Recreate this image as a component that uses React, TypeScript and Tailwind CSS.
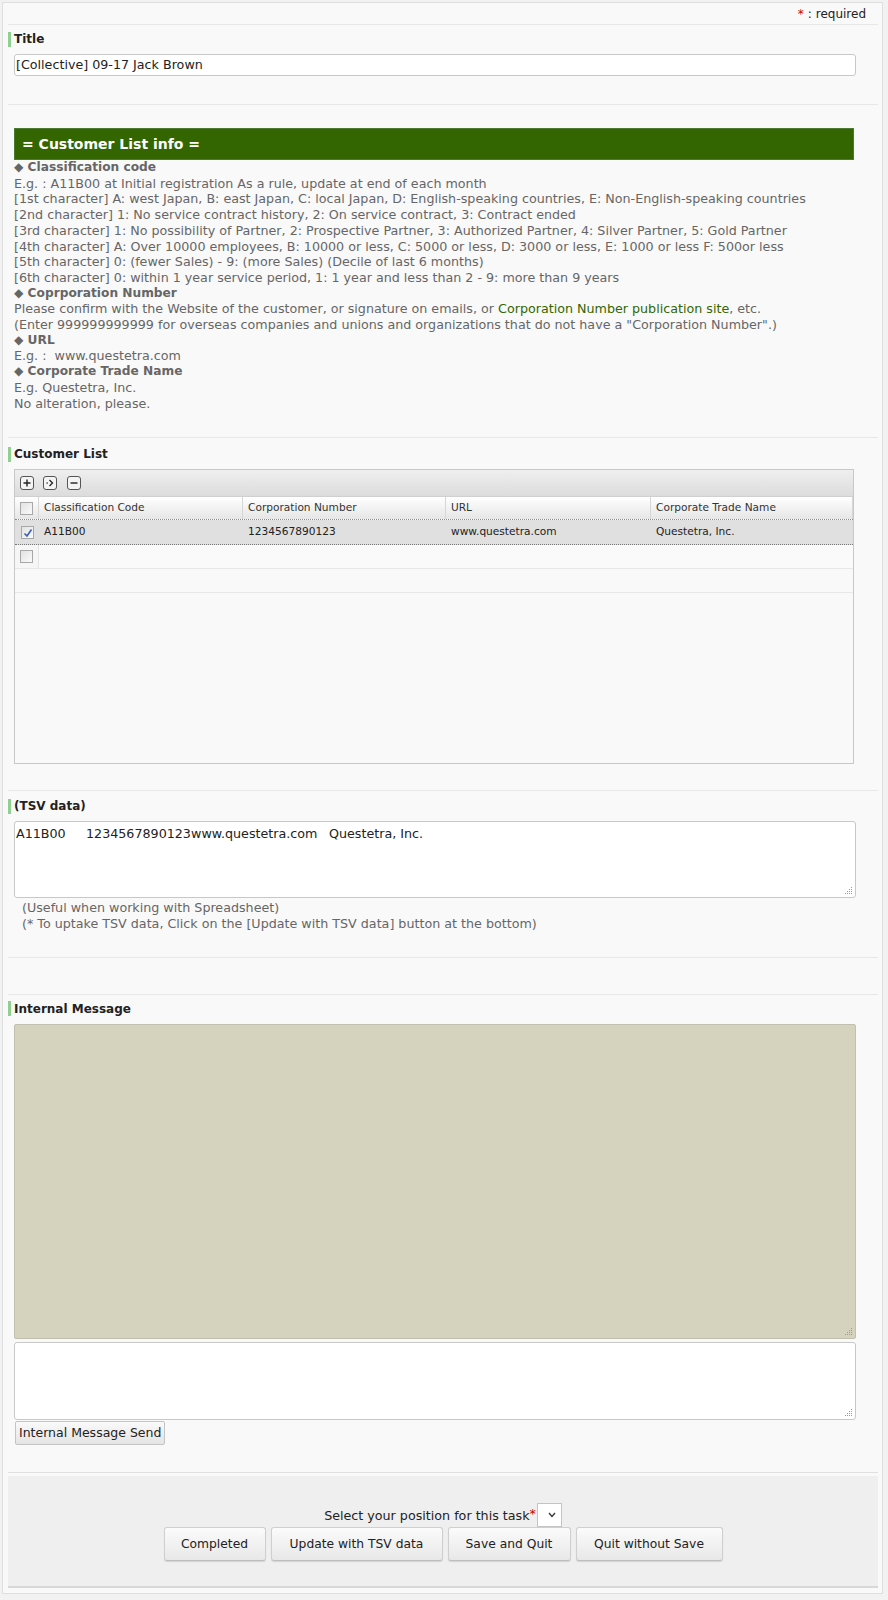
import React from 'react';

const Label = ({ children }: { children: React.ReactNode }) => (
  <div className="flex items-center h-[16px] mb-[7px]">
    <span className="w-[3px] h-[15px] bg-[#8fcf8f] mr-[3px]" />
    <span className="font-bold text-[12px] text-[#222]">{children}</span>
  </div>
);

const Grip = () => (
  <svg className="absolute right-[2px] bottom-[2px]" width="8" height="8" viewBox="0 0 8 8">
    <rect x="6" y="0" width="1" height="1" fill="#999" />
    <rect x="4" y="2" width="1" height="1" fill="#999" />
    <rect x="6" y="2" width="1" height="1" fill="#999" />
    <rect x="2" y="4" width="1" height="1" fill="#999" />
    <rect x="4" y="4" width="1" height="1" fill="#999" />
    <rect x="6" y="4" width="1" height="1" fill="#999" />
    <rect x="0" y="6" width="1" height="1" fill="#999" />
    <rect x="2" y="6" width="1" height="1" fill="#999" />
    <rect x="4" y="6" width="1" height="1" fill="#999" />
    <rect x="6" y="6" width="1" height="1" fill="#999" />
  </svg>
);

const Checkbox = ({ checked = false }: { checked?: boolean }) => (
  <span className="relative inline-block w-[13px] h-[13px] border border-[#a8a8a8] bg-gradient-to-br from-[#e2e2e2] to-[#fafafa]">
    {checked && (
      <svg className="absolute left-[1px] top-[1px]" width="10" height="10" viewBox="0 0 10 10">
        <path d="M1.5 5.5 L4 8 L8.5 1.5" stroke="#3b5fb0" strokeWidth="1.6" fill="none" />
      </svg>
    )}
  </span>
);

const ToolButton = ({ kind }: { kind: 'add' | 'insert' | 'remove' }) => (
  <span className="inline-flex items-center justify-center w-[14px] h-[14px] border border-[#555] rounded-[3px] bg-[#f4f4f4]">
    <svg width="10" height="10" viewBox="0 0 10 10">
      {kind === 'add' && <path d="M5 1.5 V8.5 M1.5 5 H8.5" stroke="#222" strokeWidth="1.4" />}
      {kind === 'remove' && <path d="M1.5 5 H8.5" stroke="#222" strokeWidth="1.4" />}
      {kind === 'insert' && (
        <>
          <rect x="1.5" y="4.4" width="1.3" height="1.3" fill="#222" />
          <path d="M4.5 2 L7.5 5 L4.5 8" stroke="#222" strokeWidth="1.3" fill="none" />
        </>
      )}
    </svg>
  </span>
);

const columns = ['Classification Code', 'Corporation Number', 'URL', 'Corporate Trade Name'];
const colWidths = ['w-[204px]', 'w-[203px]', 'w-[205px]', 'flex-1'];
const rows = [['A11B00', '1234567890123', 'www.questetra.com', 'Questetra, Inc.']];

const infoLines: { text: React.ReactNode; bold?: boolean }[] = [
  { text: '◆ Classification code', bold: true },
  { text: 'E.g. : A11B00 at Initial registration As a rule, update at end of each month' },
  { text: '[1st character] A: west Japan, B: east Japan, C: local Japan, D: English-speaking countries, E: Non-English-speaking countries' },
  { text: '[2nd character] 1: No service contract history, 2: On service contract, 3: Contract ended' },
  { text: '[3rd character] 1: No possibility of Partner, 2: Prospective Partner, 3: Authorized Partner, 4: Silver Partner, 5: Gold Partner' },
  { text: '[4th character] A: Over 10000 employees, B: 10000 or less, C: 5000 or less, D: 3000 or less, E: 1000 or less F: 500or less' },
  { text: '[5th character] 0: (fewer Sales) - 9: (more Sales) (Decile of last 6 months)' },
  { text: '[6th character] 0: within 1 year service period, 1: 1 year and less than 2 - 9: more than 9 years' },
  { text: '◆ Coprporation Number', bold: true },
  {
    text: (
      <>
        Please confirm with the Website of the customer, or signature on emails, or{' '}
        <span className="text-[#336600]">Corporation Number publication site</span>, etc.
      </>
    ),
  },
  { text: '(Enter 999999999999 for overseas companies and unions and organizations that do not have a "Corporation Number".)' },
  { text: '◆ URL', bold: true },
  { text: 'E.g. :\u00a0\u00a0www.questetra.com' },
  { text: '◆ Corporate Trade Name', bold: true },
  { text: 'E.g. Questetra, Inc.' },
  { text: 'No alteration, please.' },
];

const tsv = [
  { v: 'A11B00', w: 'w-[70px]' },
  { v: '1234567890123', w: 'w-[105px]' },
  { v: 'www.questetra.com', w: 'w-[138px]' },
  { v: 'Questetra, Inc.', w: '' },
];

const actions = [
  { label: 'Completed', w: 'w-[102px]' },
  { label: 'Update with TSV data', w: 'w-[172px]' },
  { label: 'Save and Quit', w: 'w-[123px]' },
  { label: 'Quit without Save', w: 'w-[147px]' },
];

const App = () => {
  return (
    <div className="min-h-[1600px] bg-[#f2f2f2] pt-[2px] pl-[2px] pr-[5px] font-['DejaVu_Sans',sans-serif] text-[#222]">
      <div className="border border-[#dedede] bg-[#f9f9f9] pl-[5px] pr-[4px]">
        {/* required note */}
        <div className="h-[21px] flex items-center justify-end pr-[12px] text-[12px]">
          <span className="text-[#c00] mr-[4px]">*</span>: required
        </div>

        {/* Title */}
        <section className="border-t border-[#e8e8e8] pt-[6px] pb-[28px]">
          <Label>Title</Label>
          <div className="ml-[6px] mr-[22px] h-[22px] border border-[#c8c8c8] rounded-[3px] bg-white flex items-center pl-[1px] text-[12.7px] text-[#222]">
            [Collective] 09-17 Jack Brown
          </div>
        </section>

        {/* Customer List info */}
        <section className="border-t border-[#e8e8e8] pt-[23px] pb-[26px]">
          <div className="ml-[6px] mr-[24px] h-[32px] bg-[#336600] border border-[#4d7a33] flex items-center pl-[7px] text-white font-bold text-[14px]">
            = Customer List info =
          </div>
          <div className="ml-[6px] text-[12.7px] leading-[15.7px] text-[#666]">
            {infoLines.map((l, i) => (
              <div key={i} className={l.bold ? 'font-bold text-[12.2px]' : ''}>
                {l.text}
              </div>
            ))}
          </div>
        </section>

        {/* Customer List */}
        <section className="border-t border-[#e8e8e8] pt-[8px] pb-[26px]">
          <Label>Customer List</Label>
          <div className="ml-[6px] mr-[24px] h-[295px] border border-[#c8c8c8] bg-[#f9f9f9] text-[10.6px]">
            <div className="h-[27px] bg-gradient-to-b from-[#efefef] to-[#dcdcdc] flex items-center pl-[5px] border-b border-[#d0d0d0]">
              <ToolButton kind="add" />
              <span className="w-[9px]" />
              <ToolButton kind="insert" />
              <span className="w-[10px]" />
              <ToolButton kind="remove" />
            </div>
            <div className="h-[23px] flex border-b border-dotted border-[#888] bg-gradient-to-b from-[#ffffff] to-[#e6e6e6] text-[#333]">
              <div className="w-[24px] flex items-center justify-center border-r border-[#d6d6d6]">
                <Checkbox />
              </div>
              {columns.map((c, i) => (
                <div key={c} className={`${colWidths[i]} flex items-center pl-[5px] border-r border-[#d6d6d6]`}>
                  {c}
                </div>
              ))}
            </div>
            {rows.map((r, ri) => (
              <div key={ri} className="h-[25px] flex border-b border-dotted border-[#777] bg-[#e0e0e0] text-[#222]">
                <div className="w-[24px] flex items-center justify-center">
                  <Checkbox checked />
                </div>
                {r.map((v, i) => (
                  <div key={i} className={`${colWidths[i]} flex items-center pl-[5px]`}>
                    {v}
                  </div>
                ))}
              </div>
            ))}
            <div className="h-[24px] flex border-b border-[#e8e8e8] bg-[#fafafa]">
              <div className="w-[24px] flex items-center justify-center border-r border-[#e4e4e4] bg-[#f6f6f6]">
                <Checkbox />
              </div>
            </div>
            <div className="h-[24px] border-b border-[#e8e8e8]" />
          </div>
        </section>

        {/* TSV data */}
        <section className="border-t border-[#e8e8e8] pt-[7px] pb-[25px]">
          <Label>(TSV data)</Label>
          <div className="relative ml-[6px] mr-[22px] h-[77px] border border-[#c8c8c8] rounded-[3px] bg-white pl-[1px] pt-[2px] text-[12.7px] flex items-start whitespace-nowrap">
            {tsv.map((t) => (
              <span key={t.v} className={t.w}>
                {t.v}
              </span>
            ))}
            <Grip />
          </div>
          <div className="ml-[14px] mt-[2px] text-[12.7px] leading-[15.7px] text-[#666]">
            <div>(Useful when working with Spreadsheet)</div>
            <div>(* To uptake TSV data, Click on the [Update with TSV data] button at the bottom)</div>
          </div>
        </section>

        {/* empty section */}
        <section className="border-t border-[#e8e8e8] h-[37px]" />

        {/* Internal Message */}
        <section className="border-t border-[#e8e8e8] pt-[6px] pb-[27px]">
          <Label>Internal Message</Label>
          <div className="relative ml-[6px] mr-[22px] h-[315px] border border-[#c2c0ae] rounded-[2px] bg-[#d5d3bd]">
            <Grip />
          </div>
          <div className="relative ml-[6px] mr-[22px] mt-[3px] h-[78px] border border-[#c8c8c8] rounded-[3px] bg-white">
            <Grip />
          </div>
          <button className="ml-[7px] mt-[1px] h-[24px] px-[3px] border border-[#c4c4c4] rounded-[2px] bg-gradient-to-b from-[#fafafa] to-[#e4e4e4] text-[12.5px] text-[#222]">
            Internal Message Send
          </button>
        </section>

        {/* Action area */}
        <div className="border-t border-[#e0e0e0] pt-[3px]">
          <div className="bg-[#efefef] border-b-2 border-[#d8d8d8] pt-[27px] pb-[25px] flex flex-col items-center text-[12.7px]">
            <div className="flex items-center h-[24px]">
              <span>Select your position for this task</span>
              <span className="text-[#c00] self-start mt-[1px]">*</span>
              <span className="ml-[1px] w-[25px] h-[24px] border border-[#c4c4c4] bg-white flex items-center justify-end pr-[5px]">
                <svg width="8" height="6" viewBox="0 0 8 6">
                  <path d="M1 1 L4 4.5 L7 1" stroke="#333" strokeWidth="1.3" fill="none" />
                </svg>
              </span>
            </div>
            <div className="flex gap-[5px]">
              {actions.map((a) => (
                <button
                  key={a.label}
                  className={`${a.w} h-[34px] border border-[#cfcfcf] border-b-[#bdbdbd] rounded-[3px] bg-gradient-to-b from-[#fbfbfb] to-[#e8e8e8] shadow-[0_1px_1px_rgba(0,0,0,0.12)] text-[12.3px] text-[#222]`}
                >
                  {a.label}
                </button>
              ))}
            </div>
          </div>
          <div className="h-[5px]" />
        </div>
      </div>
    </div>
  );
};

export default App;
